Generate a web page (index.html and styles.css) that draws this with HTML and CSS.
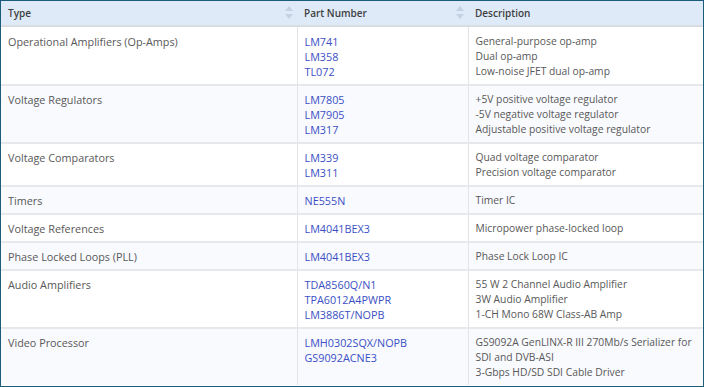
FILE: index.html
```html
<!DOCTYPE html>
<html>
<head>
<meta charset="utf-8">
<link rel="stylesheet" href="styles.css">
</head>
<body>
<div class="frame">
<table class="parts">
  <colgroup><col class="c1"><col class="c2"><col class="c3"></colgroup>
  <thead>
    <tr>
      <th><span>Type</span><i class="sort"></i></th>
      <th><span>Part Number</span><i class="sort"></i></th>
      <th><span>Description</span></th>
    </tr>
  </thead>
  <tbody>
    <tr>
      <td>Operational Amplifiers (Op-Amps)</td>
      <td><a>LM741</a><a>LM358</a><a>TL072</a></td>
      <td class="desc">General-purpose op-amp<br>Dual op-amp<br>Low-noise JFET dual op-amp</td>
    </tr>
    <tr>
      <td>Voltage Regulators</td>
      <td><a>LM7805</a><a>LM7905</a><a>LM317</a></td>
      <td class="desc">+5V positive voltage regulator<br>-5V negative voltage regulator<br>Adjustable positive voltage regulator</td>
    </tr>
    <tr>
      <td>Voltage Comparators</td>
      <td><a>LM339</a><a>LM311</a></td>
      <td class="desc">Quad voltage comparator<br>Precision voltage comparator</td>
    </tr>
    <tr>
      <td>Timers</td>
      <td><a>NE555N</a></td>
      <td class="desc">Timer IC</td>
    </tr>
    <tr>
      <td>Voltage References</td>
      <td><a>LM4041BEX3</a></td>
      <td class="desc">Micropower phase-locked loop</td>
    </tr>
    <tr>
      <td>Phase Locked Loops (PLL)</td>
      <td><a>LM4041BEX3</a></td>
      <td class="desc">Phase Lock Loop IC</td>
    </tr>
    <tr>
      <td>Audio Amplifiers</td>
      <td><a>TDA8560Q/N1</a><a>TPA6012A4PWPR</a><a>LM3886T/NOPB</a></td>
      <td class="desc">55 W 2 Channel Audio Amplifier<br>3W Audio Amplifier<br>1-CH Mono 68W Class-AB Amp</td>
    </tr>
    <tr>
      <td>Video Processor</td>
      <td><a>LMH0302SQX/NOPB</a><a>GS9092ACNE3</a></td>
      <td class="desc">GS9092A GenLINX-R III 270Mb/s Serializer for SDI and DVB-ASI<br>3-Gbps HD/SD SDI Cable Driver</td>
    </tr>
  </tbody>
</table>
</div>
</body>
</html>
```

FILE: styles.css
```css
html, body {
  margin: 0;
  padding: 0;
  background: #ffffff;
}
.frame {
  width: 702px;
  height: 385px;
  border: 1px solid #1d5d7c;
  box-shadow: 1px 1px 0 #5f8ea6;
  overflow: hidden;
  font-family: "Open Sans", "Noto Sans", sans-serif;
  font-size: 10.8px;
  line-height: 15px;
  color: #585858;
}
.parts {
  width: 702px;
  border-collapse: collapse;
  table-layout: fixed;
}
.c1 { width: 296px; }
.c2 { width: 171px; }
.c3 { width: 235px; }
thead th {
  background: #dfeaf8;
  height: 24px;
  padding: 0 7px;
  text-align: left;
  font-size: 10px;
  font-weight: 600;
  color: #3e3e3e;
  border-bottom: 2px solid #d9dde2;
  position: relative;
}
.sort {
  position: absolute;
  right: 4px;
  top: 5px;
  width: 8px;
  height: 13px;
}
.sort::before, .sort::after {
  content: "";
  position: absolute;
  left: 0;
  border-left: 4px solid transparent;
  border-right: 4px solid transparent;
}
.sort::before {
  top: 0;
  border-bottom: 5px solid #c4d2e2;
}
.sort::after {
  bottom: 0;
  border-top: 5px solid #c4d2e2;
}
tbody td {
  vertical-align: top;
  padding: 6px 7px 5px 7px;
  border-top: 2px solid #e6e8eb;
  border-left: 1px solid #e2e4e8;
}
tbody td:first-child {
  border-left: none;
}
tbody td.desc {
  font-size: 10.3px;
}
tbody tr:first-child td {
  border-top: none;
  padding-top: 7px;
}
tbody tr:nth-child(even) td {
  background: #f8fafe;
}
tbody a {
  display: block;
  color: #3b4fc4;
  text-decoration: none;
}
```
